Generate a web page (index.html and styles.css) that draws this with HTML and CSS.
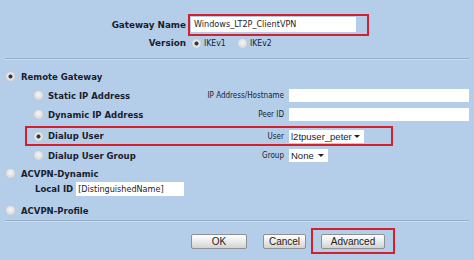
FILE: index.html
```html
<!DOCTYPE html>
<html>
<head>
<meta charset="utf-8">
<link rel="stylesheet" href="styles.css">
</head>
<body>
<div class="page">
  <div class="top">
    <div class="trow gw">
      <div class="tlabel">Gateway Name</div>
      <div class="redbox gwbox"><div class="field gwfield">Windows_LT2P_ClientVPN</div></div>
    </div>
    <div class="trow ver">
      <div class="tlabel">Version</div>
      <div class="opts">
        <span class="radio on"></span><span class="opt">IKEv1</span>
        <span class="radio"></span><span class="opt">IKEv2</span>
      </div>
    </div>
  </div>
  <div class="sep"></div>
  <div class="main">
    <div class="row r19 l1">
      <span class="radio on"></span><span class="blab">Remote Gateway</span>
    </div>
    <div class="row r19 l2">
      <div class="left"><span class="radio"></span><span class="blab">Static IP Address</span></div>
      <div class="mlab">IP Address/Hostname</div>
      <div class="field wide"></div>
    </div>
    <div class="row r19 l2">
      <div class="left"><span class="radio"></span><span class="blab">Dynamic IP Address</span></div>
      <div class="mlab">Peer ID</div>
      <div class="field wide"></div>
    </div>
    <div class="row boxed redbox">
      <div class="left"><span class="radio on"></span><span class="blab">Dialup User</span></div>
      <div class="mlab">User</div>
      <div class="select user"><span>l2tpuser_peter</span><span class="arrow"></span></div>
    </div>
    <div class="row r19 l2">
      <div class="left"><span class="radio"></span><span class="blab">Dialup User Group</span></div>
      <div class="mlab">Group</div>
      <div class="select group"><span>None</span><span class="arrow"></span></div>
    </div>
    <div class="row r17 l1">
      <span class="radio"></span><span class="blab">ACVPN-Dynamic</span>
    </div>
    <div class="row lid">
      <span class="blab">Local ID</span>
      <div class="field lidfield">[DistinguishedName]</div>
    </div>
    <div class="row r19 l1 prof">
      <span class="radio"></span><span class="blab">ACVPN-Profile</span>
    </div>
  </div>
  <div class="sep sep2"></div>
  <div class="buttons">
    <button class="btn ok">OK</button>
    <button class="btn cancel">Cancel</button>
    <div class="redbox advbox"><button class="btn adv">Advanced</button></div>
  </div>
</div>
</body>
</html>
```

FILE: styles.css
```css
* { box-sizing: border-box; }
html, body { margin: 0; padding: 0; }
body {
  width: 474px;
  height: 260px;
  overflow: hidden;
  background: #b4cde9;
  color: #1a1d2e;
  font-family: "DejaVu Sans", Verdana, sans-serif;
}
.page { width: 474px; height: 260px; }

.top { padding-top: 14px; }
.trow { display: flex; align-items: center; }
.tlabel {
  width: 188px;
  padding-right: 2px;
  text-align: right;
  font-weight: bold;
  font-size: 8.8px;
}
.gw { height: 22px; }
.ver { height: 14px; }

.redbox { border: 2px solid #d4202c; }
.gwbox {
  width: 181px;
  height: 22px;
  padding: 1px 11px 2px 1px;
}
.field {
  background: #fff;
  font-family: "DejaVu Sans Condensed", "DejaVu Sans", sans-serif;
  font-size: 9px;
  line-height: 14px;
  height: 14px;
  padding-left: 2px;
  white-space: nowrap;
}
.gwfield { height: 15px; line-height: 15px; padding-left: 3px; }

.opts { display: flex; align-items: center; font-size: 8.6px; }
.opts .radio { margin-left: 4px; }
.opt { margin-left: 3px; width: 30px; font-family: "DejaVu Sans Condensed", "DejaVu Sans", sans-serif; }

.radio {
  display: inline-block;
  width: 9px;
  height: 9px;
  border-radius: 50%;
  background: radial-gradient(circle at 50% 40%, #f6f6f6 0%, #e0e0e0 55%, #cbcdd0 100%);
  box-shadow: 0 0 0 0.5px #c0c5cb;
  flex: none;
}
.radio.on {
  background: radial-gradient(circle, #34373e 0%, #34373e 26%, #eeeeee 38%, #d6d6d6 75%, #b9bcc0 100%);
}

.sep {
  margin: 8px 5px 0 5px;
  width: 464px;
  height: 2px;
  border-top: 1px solid #98aec7;
  border-bottom: 1px solid #c9dbef;
}

.main { padding-top: 7px; }
.row { display: flex; align-items: center; }
.r19 { height: 19px; }
.r17 { height: 17px; }
.l1 { padding-left: 6px; }
.l1 .blab { margin-left: 6px; }
.l2 { padding-left: 34px; }
.l2 .left, .boxed .left { display: flex; align-items: center; }
.l2 .left { width: 171px; }
.left .blab { margin-left: 5px; }
.blab { font-weight: bold; font-size: 8.5px; white-space: nowrap; }
.mlab {
  width: 79px;
  text-align: right;
  font-size: 8px;
  font-family: "DejaVu Sans Condensed", "DejaVu Sans", sans-serif;
  white-space: nowrap;
  padding-right: 0;
}
.l2 .field, .boxed .select, .l2 .select { margin-left: 5px; }
.wide { width: 180px; height: 13px; }

.boxed {
  margin-top: 2px;
  margin-left: 25px;
  width: 368px;
  height: 20px;
  padding-left: 7px;
}
.boxed .left { width: 171px; }

.select {
  background: #fff;
  height: 13px;
  display: flex;
  align-items: center;
  justify-content: space-between;
  font-family: "Liberation Sans", Arial, sans-serif;
  font-size: 9.5px;
  padding: 0 4px 0 2px;
}
.select.user { width: 75px; }
.select.group { width: 39px; }
.arrow {
  width: 0; height: 0;
  border-left: 3px solid transparent;
  border-right: 3px solid transparent;
  border-top: 3px solid #222;
}

.lid { height: 14px; margin-top: 0; padding-left: 35px; }
.lidfield {
  margin-left: 3px;
  width: 108px;
  font-size: 9px;
}
.prof { margin-top: 5px; }

.sep2 { margin-top: 0; }

.buttons {
  display: flex;
  align-items: center;
  padding-left: 191px;
  margin-top: 6px;
  height: 26px;
}
.btn {
  font-family: "Liberation Sans", Arial, sans-serif;
  font-size: 10px;
  color: #222;
  height: 15px;
  padding: 0;
  border: 1px solid #8d9094;
  border-radius: 2px;
  background: linear-gradient(#ffffff, #e6e6e6 60%, #d2d2d2);
  line-height: 13px;
}
.ok { width: 56px; }
.cancel { width: 43px; margin-left: 16px; }
.advbox {
  margin-left: 5px;
  height: 26px;
  width: 84px;
  padding-left: 8px;
  display: flex;
  align-items: center;
}
.adv { width: 64px; }
```
